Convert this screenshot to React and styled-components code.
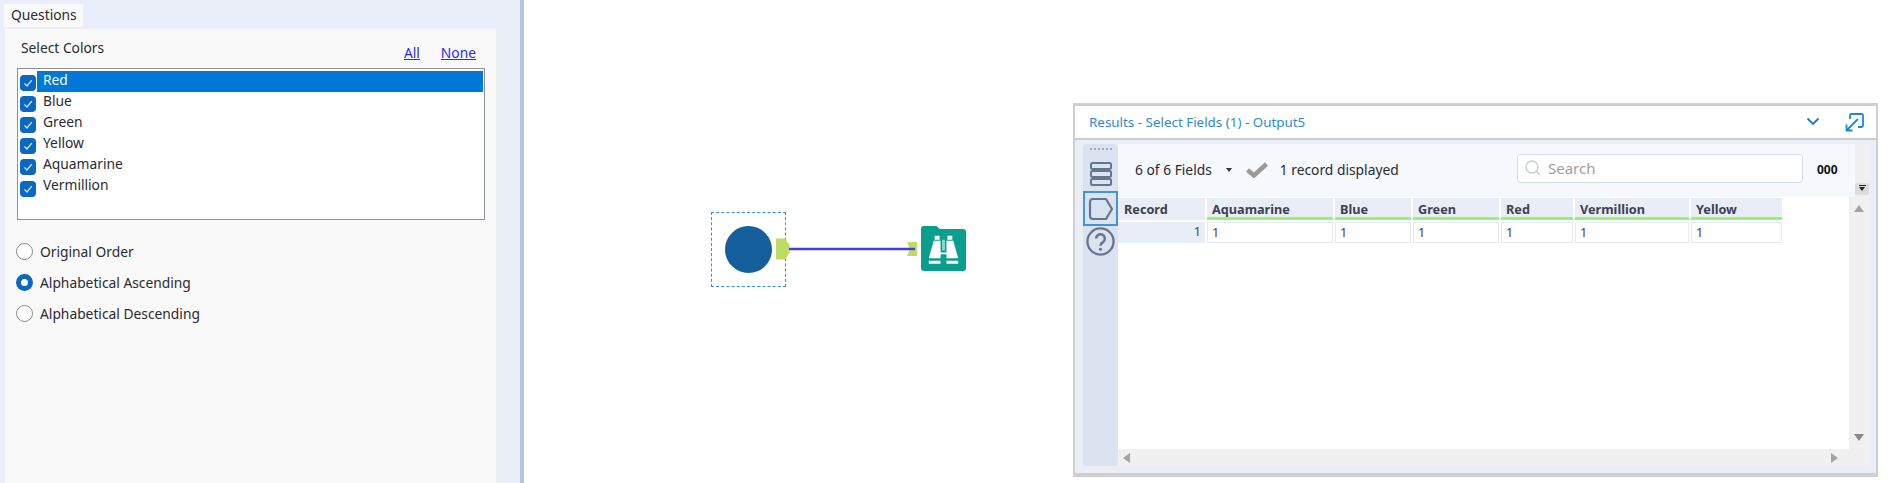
import React from "react";
import styled, { createGlobalStyle } from "styled-components";

const GlobalStyle = createGlobalStyle`
  html, body {
    margin: 0;
    padding: 0;
    background: #fff;
  }
  body {
    font-family: "Noto Sans", "Open Sans", sans-serif;
    font-size: 13.8px;
    color: #2a2a33;
  }
`;

const Page = styled.div`
  display: flex;
  width: 1896px;
  height: 483px;
  overflow: hidden;
`;

/* left configuration panel */
const Side = styled.aside`
  box-sizing: border-box;
  width: 524px;
  flex: none;
  padding: 3px 22px 0 3px;
  background: #e9eef8;
  border-right: 4px solid #b3c4e4;
  display: flex;
  flex-direction: column;
`;

const Tab = styled.div`
  box-sizing: border-box;
  width: 81px;
  height: 24px;
  padding-left: 7px;
  line-height: 22px;
  background: #f9f9f9;
  border: 1px solid #eef0f4;
  border-bottom: 0;
`;

const Panel = styled.div`
  flex: 1;
  box-sizing: border-box;
  padding: 10px 11px 0 12px;
  background: #f9f9f9;
  border: 2px solid #eceef3;
  border-bottom: 0;
`;

const PanelHead = styled.div`
  display: flex;
  align-items: flex-end;
  height: 27px;
  padding: 0 9px 4px 4px;
  box-sizing: border-box;
`;

const PanelTitle = styled.span`
  flex: 1;
  align-self: flex-start;
  line-height: 18px;
`;

const HeadLink = styled.a`
  margin-left: 21px;
  line-height: 18px;
  color: #2b2bf0;
  text-decoration: underline;
`;

const ListBox = styled.div`
  box-sizing: border-box;
  height: 152px;
  margin-top: 2px;
  padding: 2px 1px;
  background: #fff;
  border: 1px solid #8b929c;
`;

const ListRow = styled.div`
  display: flex;
  align-items: center;
  height: 21.1px;
`;

const Check = styled.span`
  box-sizing: border-box;
  width: 16px;
  height: 16px;
  margin: 3px 1px 0 1px;
  flex: none;
  display: flex;
  align-items: center;
  justify-content: center;
  background: #0a67c2;
  border-radius: 4px;
`;

const RowLabel = styled.span`
  flex: 1;
  height: 100%;
  padding-left: 6px;
  line-height: 18px;
  background: ${p => (p.$selected ? "#0078d7" : "transparent")};
  color: ${p => (p.$selected ? "#f4f8fc" : "inherit")};
`;

const RadioGroup = styled.div`
  display: flex;
  flex-direction: column;
  gap: 14px;
  margin: 22.5px 0 0 -1px;
`;

const RadioRow = styled.label`
  display: flex;
  align-items: center;
  gap: 7px;
  height: 17px;
`;

const RadioDot = styled.span`
  box-sizing: border-box;
  width: 17px;
  height: 17px;
  flex: none;
  border-radius: 50%;
  background: #fff;
  border: ${p => (p.$on ? "5px solid #0a67c2" : "1.5px solid #8a8a8a")};
`;

/* workflow canvas with the results window floating at the right */
const Workspace = styled.main`
  position: relative;
  flex: 1;
  display: flex;
  justify-content: flex-end;
  align-items: flex-start;
  padding: 103px 18px 0 0;
`;

const ToolFrame = styled.div`
  position: absolute;
  left: 187px;
  top: 212px;
  box-sizing: border-box;
  width: 75px;
  height: 75px;
  border: 1px dashed #2f8fe0;
  display: flex;
  align-items: center;
  justify-content: center;
`;

const ToolCircle = styled.div`
  width: 47px;
  height: 47px;
  border-radius: 50%;
  background: #155f9c;
`;

const Wire = styled.svg`
  position: absolute;
  left: 252px;
  top: 234px;
  width: 145px;
  height: 30px;
`;

const BrowseTool = styled.svg`
  position: absolute;
  left: 397px;
  top: 226px;
  width: 45px;
  height: 45px;
`;

const ResultWindow = styled.section`
  box-sizing: border-box;
  width: 805px;
  height: 374px;
  display: flex;
  flex-direction: column;
  background: #eaeef7;
  border: 2px solid #cfcfcf;
  border-top-width: 3px;
  border-bottom-width: 4px;
`;

const WindowHead = styled.header`
  display: flex;
  align-items: center;
  flex: none;
  height: 32px;
  padding: 0 11px 0 14px;
  font-size: 13.4px;
  background: #fff;
  border-bottom: 2px solid #cdcdcd;
  color: #2f8bcd;
`;

const WindowTitle = styled.span`
  flex: 1;
`;

const Chevron = styled.svg`
  width: 14px;
  height: 9px;
  margin: -2px 24px 0 0;
`;

const WindowBody = styled.div`
  flex: 1;
  min-height: 0;
  display: flex;
  padding: 4px 7px 7px 8px;
`;

const Rail = styled.nav`
  width: 35px;
  flex: none;
  display: flex;
  flex-direction: column;
  align-items: center;
  background: #dce3f0;
  border-radius: 4px 4px 2px 2px;
`;

const Grip = styled.div`
  width: 22px;
  height: 8px;
  margin-top: 4px;
  box-sizing: border-box;
  border-top: 2px dotted #a8aeb8;
`;

const RailButton = styled.div`
  box-sizing: border-box;
  width: 35px;
  height: 35px;
  flex: none;
  display: flex;
  align-items: center;
  justify-content: center;
  border: ${p => (p.$active ? "2px solid #3f96dc" : "2px solid transparent")};
  margin-bottom: ${p => (p.$active ? "-2px" : "0")};
`;

const Main = styled.div`
  flex: 1;
  min-width: 0;
  display: flex;
  flex-direction: column;
  background: #f0f0f0;
`;

const Toolbar = styled.div`
  flex: none;
  display: flex;
  align-items: center;
  box-sizing: border-box;
  height: 53px;
  padding: 0 0 2px 17px;
  margin-right: 14px;
  background: #f5f8fd;
`;

const FieldPick = styled.span`
  margin-right: 14px;
`;

const Caret = styled.span`
  width: 0;
  height: 0;
  margin-right: 14px;
  border: 3.5px solid transparent;
  border-top: 4px solid #333;
  border-bottom: 0;
`;

const RecordCount = styled.span`
  flex: 1;
  margin-left: 12px;
`;

const SearchBox = styled.div`
  box-sizing: border-box;
  width: 286px;
  height: 29px;
  margin-top: -3px;
  display: flex;
  align-items: center;
  gap: 6px;
  padding-left: 6px;
  background: #fff;
  border: 1px solid #d5dcea;
  border-radius: 4px;
  color: #a0a0a0;
  font-size: 15px;
`;

const Dots = styled.span`
  width: 20px;
  margin: 0 18px 0 14px;
  font-size: 12px;
  font-weight: 700;
  color: #111;
`;

const Middle = styled.div`
  flex: 1;
  min-height: 0;
  display: flex;
  position: relative;
`;

const Sheet = styled.div`
  flex: 1;
  background: #fff;
  padding-top: 1px;
`;

const Grid = styled.div`
  display: grid;
  grid-template-columns: 87px 126px 76px 86px 72px 114px 91px;
  grid-auto-rows: auto;
  column-gap: 2px;
  row-gap: 2px;
  width: 664px;
  font-size: 12.7px;
`;

const HeadCell = styled.div`
  box-sizing: border-box;
  height: 22px;
  padding-left: ${p => (p.$plain ? "6px" : "5px")};
  line-height: 22px;
  font-weight: 700;
  color: #3c4250;
  background: #e8edf7;
  border-bottom: ${p => (p.$plain ? "0" : "3px solid #98f46e")};
`;

const Cell = styled.div`
  box-sizing: border-box;
  height: 21px;
  padding: 0 4px;
  line-height: 19px;
  color: #444;
  text-align: ${p => (p.$right ? "right" : "left")};
  background: ${p => (p.$right ? "#e8edf7" : "#fff")};
  border: ${p => (p.$right ? "0" : "1px solid #e4e9f3")};
`;

const VBar = styled.div`
  width: 20px;
  flex: none;
  display: flex;
  flex-direction: column;
  align-items: center;
  justify-content: space-between;
  padding: 8px 0 8px;
  box-sizing: border-box;
`;

const HBar = styled.div`
  flex: none;
  height: 17px;
  display: flex;
  align-items: center;
  justify-content: space-between;
  padding: 0 31px 0 5px;
`;

const Arrow = styled.span`
  width: 0;
  height: 0;
  border-style: solid;
  border-color: transparent;
  ${p => p.$dir === "up" && "border-width: 0 5.5px 7px; border-bottom-color: #a3a3a3;"}
  ${p => p.$dir === "down" && "border-width: 7px 5.5px 0; border-top-color: #8a8a8a;"}
  ${p => p.$dir === "left" && "border-width: 5.5px 7px 5.5px 0; border-right-color: #a3a3a3;"}
  ${p => p.$dir === "right" && "border-width: 5.5px 0 5.5px 7px; border-left-color: #a3a3a3;"}
`;

const ColumnMenu = styled.div`
  position: absolute;
  top: -14px;
  right: 0;
  box-sizing: border-box;
  width: 14px;
  height: 12px;
  padding-top: 2px;
  background: #dcdcdc;
  border-radius: 2px;
  display: flex;
  flex-direction: column;
  align-items: center;
`;

const MenuBar = styled.span`
  width: 7px;
  height: 1px;
  margin-bottom: 1px;
  background: #222;
`;

const MenuTip = styled.span`
  width: 0;
  height: 0;
  border: 3.5px solid transparent;
  border-top: 4px solid #222;
  border-bottom: 0;
`;

const colours = ["Red", "Blue", "Green", "Yellow", "Aquamarine", "Vermillion"];
const orders = [
  { label: "Original Order" },
  { label: "Alphabetical Ascending", on: true },
  { label: "Alphabetical Descending" },
];
const fields = ["Aquamarine", "Blue", "Green", "Red", "Vermillion", "Yellow"];

const Tick = () => (
  <svg width="10" height="10" viewBox="0 0 10 10" fill="none">
    <path d="M1.5 5.5 4 8 8.8 2.2" stroke="#d6e6f6" strokeWidth="1.3" />
  </svg>
);

const StackIcon = () => (
  <svg width="26" height="26" viewBox="0 0 26 26" fill="none" stroke="#66758f" strokeWidth="2">
    <rect x="3" y="2" width="20" height="6" rx="1.5" />
    <rect x="3" y="10" width="20" height="6" rx="1.5" />
    <rect x="3" y="18" width="20" height="6" rx="1.5" />
  </svg>
);

const TagIcon = () => (
  <svg width="26" height="24" viewBox="0 0 26 24" fill="none" stroke="#66758f" strokeWidth="2.2">
    <path d="M5 2h13l6 10-6 10H5a3 3 0 0 1-3-3V5a3 3 0 0 1 3-3z" strokeLinejoin="round" />
  </svg>
);

const HelpIcon = () => (
  <svg width="29" height="29" viewBox="0 0 30 30" fill="none" stroke="#66758f">
    <circle cx="15" cy="15" r="13.5" strokeWidth="2.4" />
    <path d="M10.5 12a4.5 4.5 0 1 1 7 3.7c-1.6 1-2.5 1.8-2.5 3.6" strokeWidth="2.6" />
    <circle cx="15" cy="23" r="1.6" fill="#66758f" stroke="none" />
  </svg>
);

const SearchGlass = () => (
  <svg width="18" height="18" viewBox="0 0 18 18" fill="none" stroke="#c3ccd6" strokeWidth="1.4">
    <circle cx="8" cy="8" r="6" />
    <path d="M12.5 12.5 16 16" />
  </svg>
);

const PopIcon = () => (
  <svg width="21" height="21" viewBox="0 0 21 21" fill="none" stroke="#1f86d8" strokeWidth="1.8">
    <path d="M6 7V3.5A1.5 1.5 0 0 1 7.5 2h10A1.5 1.5 0 0 1 19 3.5v10a1.5 1.5 0 0 1-1.5 1.5H14" />
    <path d="M14 7 2.5 18.5M2.5 12.5v6h6" />
  </svg>
);

export default function App() {
  return (
    <Page>
      <GlobalStyle />
      <Side>
        <Tab>Questions</Tab>
        <Panel>
          <PanelHead>
            <PanelTitle>Select Colors</PanelTitle>
            <HeadLink>All</HeadLink>
            <HeadLink>None</HeadLink>
          </PanelHead>
          <ListBox>
            {colours.map((c, i) => (
              <ListRow key={c}>
                <Check><Tick /></Check>
                <RowLabel $selected={i === 0}>{c}</RowLabel>
              </ListRow>
            ))}
          </ListBox>
          <RadioGroup>
            {orders.map(o => (
              <RadioRow key={o.label}>
                <RadioDot $on={o.on} />
                {o.label}
              </RadioRow>
            ))}
          </RadioGroup>
        </Panel>
      </Side>
      <Workspace>
        <ToolFrame><ToolCircle /></ToolFrame>
        <Wire viewBox="0 0 145 30">
          <path d="M0 4.5h9l4.5 6.5v8L9 25.500H0z" fill="#bfdc62" />
          <path d="M13 15h126" stroke="#3f3fe6" strokeWidth="2.4" />
          <path d="M131 8h10v14h-10l3-7z" fill="#bfdc62" />
          <path d="M133 15h6" stroke="#3f3fe6" strokeWidth="2.4" />
        </Wire>
        <BrowseTool viewBox="0 0 46 46">
          <path d="M3 0h13l3 3h24a3 3 0 0 1 3 3v37a3 3 0 0 1-3 3H3a3 3 0 0 1-3-3V3a3 3 0 0 1 3-3z" fill="#0a9f8c" />
          <g fill="#fff">
            <path d="M14 10h5v4h-5zM27 10h5v4h-5z" />
            <path d="M13 15h7v12h6V15h7l5 18H26v-4h-6v4H8z" />
            <path d="M21.500 14h3v11h-3z" fillOpacity="0.55" />
            <path d="M8 35.500h12v3H8zM26 35.500h12v3H26z" />
          </g>
        </BrowseTool>
        <ResultWindow>
          <WindowHead>
            <WindowTitle>Results - Select Fields (1) - Output5</WindowTitle>
            <Chevron viewBox="0 0 14 9" fill="none" stroke="#1f78c8" strokeWidth="1.8">
              <path d="M1.5 1.5 7 7l5.5-5.5" />
            </Chevron>
            <PopIcon />
          </WindowHead>
          <WindowBody>
            <Rail>
              <Grip />
              <RailButton><StackIcon /></RailButton>
              <RailButton $active><TagIcon /></RailButton>
              <RailButton><HelpIcon /></RailButton>
            </Rail>
            <Main>
              <Toolbar>
                <FieldPick>6 of 6 Fields</FieldPick>
                <Caret />
                <svg width="22" height="16" viewBox="0 0 22 16" fill="none" stroke="#9a9a9a" strokeWidth="4.5">
                  <path d="M1.500 8 8 13.500 20.500 2" />
                </svg>
                <RecordCount>1 record displayed</RecordCount>
                <SearchBox><SearchGlass />Search</SearchBox>
                <Dots>000</Dots>
              </Toolbar>
              <Middle>
                <Sheet>
                  <Grid>
                    <HeadCell $plain>Record</HeadCell>
                    {fields.map(f => <HeadCell key={f}>{f}</HeadCell>)}
                    <Cell $right>1</Cell>
                    {fields.map(f => <Cell key={f}>1</Cell>)}
                  </Grid>
                </Sheet>
                <VBar>
                  <Arrow $dir="up" />
                  <Arrow $dir="down" />
                </VBar>
                <ColumnMenu><MenuBar /><MenuTip /></ColumnMenu>
              </Middle>
              <HBar>
                <Arrow $dir="left" />
                <Arrow $dir="right" />
              </HBar>
            </Main>
          </WindowBody>
        </ResultWindow>
      </Workspace>
    </Page>
  );
}
